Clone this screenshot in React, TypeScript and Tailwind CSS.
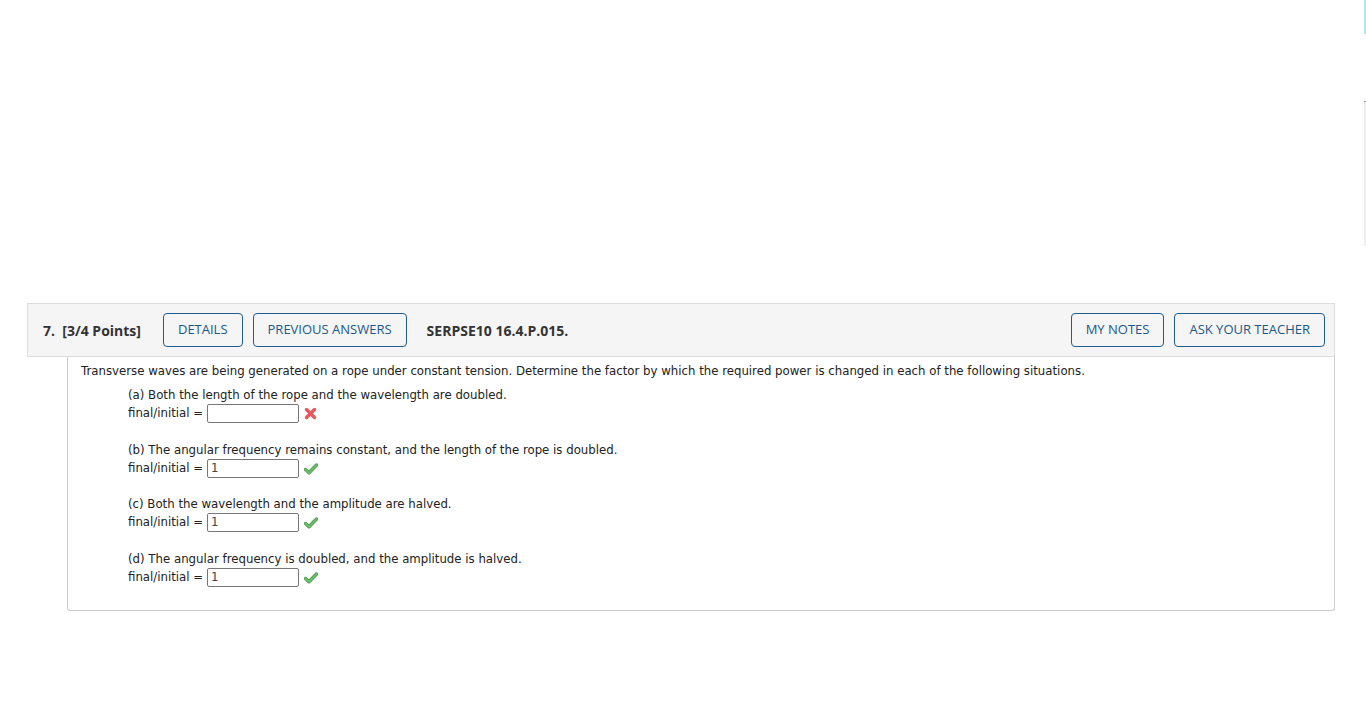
import React from "react";

const parts = [
  { label: "(a) Both the length of the rope and the wavelength are doubled.", value: "", ok: false },
  { label: "(b) The angular frequency remains constant, and the length of the rope is doubled.", value: "1", ok: true },
  { label: "(c) Both the wavelength and the amplitude are halved.", value: "1", ok: true },
  { label: "(d) The angular frequency is doubled, and the amplitude is halved.", value: "1", ok: true },
];

function CrossIcon() {
  return (
    <svg width="13" height="13" viewBox="0 0 13 13" className="ml-[5px] mt-[3px]">
      <path d="M2.5 2.5 L10.5 10.5 M10.5 2.5 L2.5 10.5" stroke="#e8585d" strokeWidth="3.4" strokeLinecap="round" />
    </svg>
  );
}

function CheckIcon() {
  return (
    <svg width="14" height="12" viewBox="0 0 14 12" className="ml-[5px] mt-[4px]">
      <path d="M1.5 6.5 L5 9.8 L12.5 2" fill="none" stroke="#4e9a4e" strokeWidth="3.4" strokeLinecap="round" strokeLinejoin="round" />
      <path d="M1.5 6.5 L5 9.8 L12.5 2" fill="none" stroke="#6cc06c" strokeWidth="1.8" strokeLinecap="round" strokeLinejoin="round" />
    </svg>
  );
}

function OutlineButton({ children }: { children: React.ReactNode }) {
  return (
    <button className="h-[34px] px-[14px] rounded-[4px] border border-[#1f5d8c] text-[#1b5788] text-[13px] bg-transparent">
      {children}
    </button>
  );
}

export default function App() {
  return (
    <div className="relative min-h-screen bg-white pt-[303px] pl-[27px] pr-[31px]" style={{ fontFamily: '"Open Sans", "Liberation Sans", sans-serif' }}>
      {/* scrollbar fragments at the right edge */}
      <div className="absolute right-0 top-0 w-[2px] h-[34px] bg-[#b4e6ef]" />
      <div className="absolute right-0 top-[101px] w-[2px] h-[145px] bg-[#efefef] border-t border-[#999]" />

      <div className="flex items-center h-[54px] pl-[15px] pr-[9px] bg-[#f5f5f5] border border-[#dddddd]">
        <span className="text-[14px] font-bold text-[#333] mr-[22px]">7.&nbsp; [3/4 Points]</span>
        <div className="flex gap-[10px]">
          <OutlineButton>DETAILS</OutlineButton>
          <OutlineButton>PREVIOUS ANSWERS</OutlineButton>
        </div>
        <span className="ml-[20px] text-[14px] font-bold text-[#333]">SERPSE10 16.4.P.015.</span>
        <div className="ml-auto flex gap-[10px]">
          <OutlineButton>MY NOTES</OutlineButton>
          <OutlineButton>ASK YOUR TEACHER</OutlineButton>
        </div>
      </div>

      <div
        className="ml-[40px] border border-t-0 border-[#cccccc] rounded-b-[3px] pt-[5px] pl-[13px] pb-[23px] text-[11.75px] leading-[18px] text-[#222]"
        style={{ fontFamily: '"DejaVu Sans", Verdana, sans-serif' }}
      >
        <p>
          Transverse waves are being generated on a rope under constant tension. Determine the factor by which the required power is changed in each of the following situations.
        </p>
        <div className="pl-[47px] mt-[6px] flex flex-col gap-[17.6px]">
          {parts.map((p) => (
            <div key={p.label}>
              <p>{p.label}</p>
              <div className="flex items-start h-[19px]">
                <span>final/initial =&nbsp;</span>
                <div className="w-[92px] h-[19px] border border-[#777] rounded-[2px] bg-white pl-[3px] leading-[17px] text-[#444]">
                  {p.value}
                </div>
                {p.ok ? <CheckIcon /> : <CrossIcon />}
              </div>
            </div>
          ))}
        </div>
      </div>
    </div>
  );
}
